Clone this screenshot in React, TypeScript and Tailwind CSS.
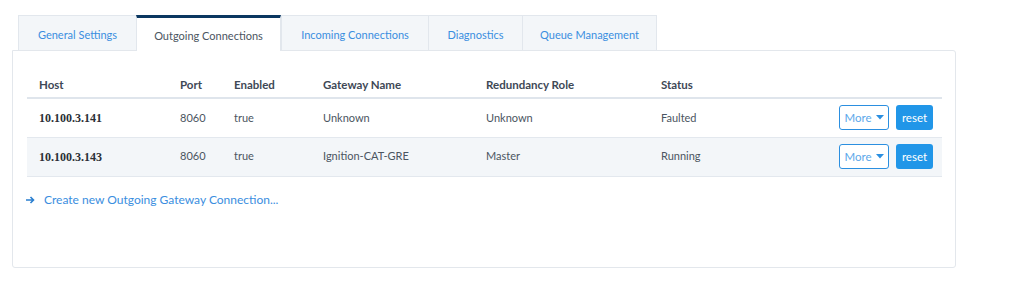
import React from "react";

const tabs = [
  { label: "General Settings", w: "w-[118px]" },
  { label: "Outgoing Connections", w: "w-[145px]", active: true },
  { label: "Incoming Connections", w: "w-[147px]" },
  { label: "Diagnostics", w: "w-[94px]" },
  { label: "Queue Management", w: "w-[135px]" },
];

const rows = [
  { host: "10.100.3.141", port: "8060", enabled: "true", name: "Unknown", role: "Unknown", status: "Faulted" },
  { host: "10.100.3.143", port: "8060", enabled: "true", name: "Ignition-CAT-GRE", role: "Master", status: "Running" },
];

function Caret() {
  return (
    <svg width="8" height="5" viewBox="0 0 8 5" className="ml-[4px]">
      <path d="M0 0 L8 0 L4 4.5 Z" fill="#2b8fe0" />
    </svg>
  );
}

function Arrow() {
  return (
    <svg width="9" height="8" viewBox="0 0 9 8">
      <path d="M0 4 H7.5 M4.5 1 L7.5 4 L4.5 7" stroke="#2b7fd0" strokeWidth="1.6" fill="none" />
    </svg>
  );
}

export default function App() {
  return (
    <div className="w-[1024px] h-[308px] bg-white pt-[15px] pl-[12px]" style={{ fontFamily: "Lato, 'Noto Sans', sans-serif" }}>
      <div className="flex pl-[6px] relative z-10">
        {tabs.map((t) =>
          t.active ? (
            <div
              key={t.label}
              className={`${t.w} h-[36px] -mb-px bg-white border-t-[3px] border-t-[#0b3760] border-x border-x-[#e2e7ed] flex items-center justify-center text-[11px] text-[#4b5561] pt-[3px]`}
            >
              {t.label}
            </div>
          ) : (
            <div
              key={t.label}
              className={`${t.w} h-[35px] bg-[#f3f6f9] border-t border-[#e2e7ed] border-l last:border-r flex items-center justify-center text-[11px] text-[#3a8ee0] pt-[5px]`}
            >
              {t.label}
            </div>
          )
        )}
      </div>
      <div className="w-[944px] h-[218px] border border-[#e3e7ec] rounded-b-[3px] rounded-tr-[3px] pl-[14px] pr-[13px] pt-[13px]">
        <table className="w-full border-collapse text-[11px] text-[#4b5561]">
          <thead>
            <tr className="h-[34px] border-b-2 border-[#dfe5ec] text-left text-[#3e4856] text-[11.5px]">
              <th className="w-[141px] pl-[12px] font-bold align-bottom pb-[4px]">Host</th>
              <th className="w-[54px] pl-[12px] font-bold align-bottom pb-[4px]">Port</th>
              <th className="w-[89px] pl-[12px] font-bold align-bottom pb-[4px]">Enabled</th>
              <th className="w-[163px] pl-[12px] font-bold align-bottom pb-[4px]">Gateway Name</th>
              <th className="w-[175px] pl-[12px] font-bold align-bottom pb-[4px]">Redundancy Role</th>
              <th className="pl-[12px] font-bold align-bottom pb-[4px]">Status</th>
              <th></th>
            </tr>
          </thead>
          <tbody>
            {rows.map((r, i) => (
              <tr key={r.host} className={`h-[39px] border-b border-[#e3e8ee] ${i % 2 === 1 ? "bg-[#f3f6f9]" : "bg-white"}`}>
                <td className="pl-[12px] font-bold text-[#2a2f36] text-[12px]" style={{ fontFamily: "'Liberation Serif', serif" }}>
                  {r.host}
                </td>
                <td className="pl-[12px]">{r.port}</td>
                <td className="pl-[12px]">{r.enabled}</td>
                <td className="pl-[12px]">{r.name}</td>
                <td className="pl-[12px]">{r.role}</td>
                <td className="pl-[12px]">{r.status}</td>
                <td className="pr-[9px]">
                  <div className="flex justify-end gap-[7px]">
                    <button className="w-[50px] h-[25px] border border-[#2b8fe0] rounded-[3px] bg-white text-[#5ba8ea] text-[11.5px] flex items-center justify-center">
                      More
                      <Caret />
                    </button>
                    <button className="w-[37px] h-[25px] rounded-[3px] bg-[#2196e8] text-white text-[11.5px] flex items-center justify-center">
                      reset
                    </button>
                  </div>
                </td>
              </tr>
            ))}
          </tbody>
        </table>
        <div className="flex items-center mt-[14px] -ml-[1px] h-[18px] text-[12px] text-[#3a8ee0]">
          <span className="w-[18px] flex items-center"><Arrow /></span>
          <span>Create new Outgoing Gateway Connection...</span>
        </div>
      </div>
    </div>
  );
}
